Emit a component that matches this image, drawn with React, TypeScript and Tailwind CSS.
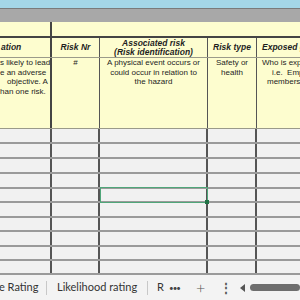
import React from "react";

const rowHeights = [15, 15, 15, 15, 14, 15, 14, 15, 14, 14];

function SheetTabs() {
  return (
    <div className="h-[25px] bg-[#f3f3f3] flex items-center text-[11px] text-[#333] font-['Lato',sans-serif] whitespace-nowrap overflow-hidden">
      <span className="w-[47px] shrink-0 -ml-[1px]">e Rating</span>
      <span className="w-px h-[14px] bg-[#c8c8c8] shrink-0" />
      <span className="pl-[10px] w-[100px] shrink-0">Likelihood rating</span>
      <span className="w-px h-[14px] bg-[#c8c8c8] shrink-0" />
      <span className="pl-[9px] w-[21px] shrink-0">R</span>
      <span className="w-[27px] shrink-0 text-[8px] tracking-[-1px] text-[#444]">•••</span>
      <span className="w-[24px] shrink-0 text-[16px] text-[#555] font-light">+</span>
      <span className="w-[19px] shrink-0 text-[12px] text-[#555] font-bold">⋮</span>
      <svg width="8" height="8" viewBox="0 0 8 8" className="shrink-0 mr-[3px]">
        <path d="M6 0 L6 8 L1 4 Z" fill="#555" />
      </svg>
      <span className="h-[7px] flex-1 rounded-full bg-[#6e6e6e]" />
    </div>
  );
}

export default function App() {
  return (
    <div className="w-[300px] h-[300px] overflow-hidden flex flex-col bg-white font-['Liberation_Sans',Arial,sans-serif] text-[#1e1e1e]">
      <div className="h-[8px] bg-[#a4d6e7] shrink-0" />
      <div className="h-[14px] bg-[#a8a8a8] border-t border-[#7a7a7a] shrink-0" />

      <div className="flex-1 flex flex-col overflow-hidden">
        {/* merged top row */}
        <div className="h-[16px] shrink-0 bg-[#fdfdcf] border-b-2 border-[#444] grid grid-cols-[52px_1fr]">
          <div className="border-r-2 border-[#444]" />
          <div />
        </div>

        {/* header row */}
        <div className="h-[20px] shrink-0 bg-[#fdfdcf] border-b border-[#9a9a8a] grid grid-cols-[52px_48px_108px_49px_1fr] text-[8.5px] font-bold italic leading-[9px]">
          <div className="border-r-2 border-[#444] flex items-center overflow-hidden">
            <span className="pl-[1px]">ation</span>
          </div>
          <div className="border-r border-[#555] flex items-center justify-center">Risk Nr</div>
          <div className="border-r border-[#555] flex flex-col items-center justify-center">
            <span>Associated risk</span>
            <span>(Risk identification)</span>
          </div>
          <div className="border-r border-[#555] flex items-center justify-center">Risk type</div>
          <div className="flex items-center pl-[5px] whitespace-nowrap overflow-hidden">Exposed g</div>
        </div>

        {/* description row */}
        <div className="h-[71px] shrink-0 bg-[#fdfdcf] border-b border-[#9a9a8a] grid grid-cols-[52px_48px_108px_49px_1fr] text-[8px] leading-[9.7px]">
          <div className="border-r-2 border-[#444] overflow-hidden whitespace-nowrap flex flex-col">
            <span>s likely to lead</span>
            <span>e an adverse</span>
            <span className="pl-[7px]">objective. A</span>
            <span>han one risk.</span>
          </div>
          <div className="border-r border-[#555] text-center">#</div>
          <div className="border-r border-[#555] text-center px-[4px]">
            A physical event occurs or could occur in relation to the hazard
          </div>
          <div className="border-r border-[#555] text-center">
            Safety or
            <br />
            health
          </div>
          <div className="overflow-hidden whitespace-nowrap flex flex-col">
            <span className="pl-[5px]">Who is exp</span>
            <span className="pl-[15px]">i.e.&nbsp; Emp</span>
            <span className="pl-[10px]">members</span>
          </div>
        </div>

        {/* empty grid rows */}
        {rowHeights.map((h, r) => (
          <div
            key={r}
            className={`${h === 15 ? "h-[15px]" : "h-[14px]"} shrink-0 bg-[#f1f1f1] border-b-2 border-[#9a9a9a] grid grid-cols-[52px_48px_108px_49px_1fr]`}
          >
            <div className="border-r-2 border-[#555]" />
            <div className="border-r-2 border-[#555]" />
            <div className={`relative border-r-2 border-[#555] ${r === 4 ? "z-10" : ""}`}>
              {r === 4 && (
                <>
                  <div className="absolute -top-[2px] -bottom-[2px] left-0 -right-[2px] border-[1.5px] border-[#4fa679]" />
                  <div className="absolute -right-[3px] -bottom-[3px] w-[4px] h-[4px] bg-[#217346]" />
                </>
              )}
            </div>
            <div className="border-r-2 border-[#555]" />
            <div />
          </div>
        ))}
        <div className="flex-1 bg-[#f1f1f1]" />
      </div>

      <SheetTabs />
    </div>
  );
}
